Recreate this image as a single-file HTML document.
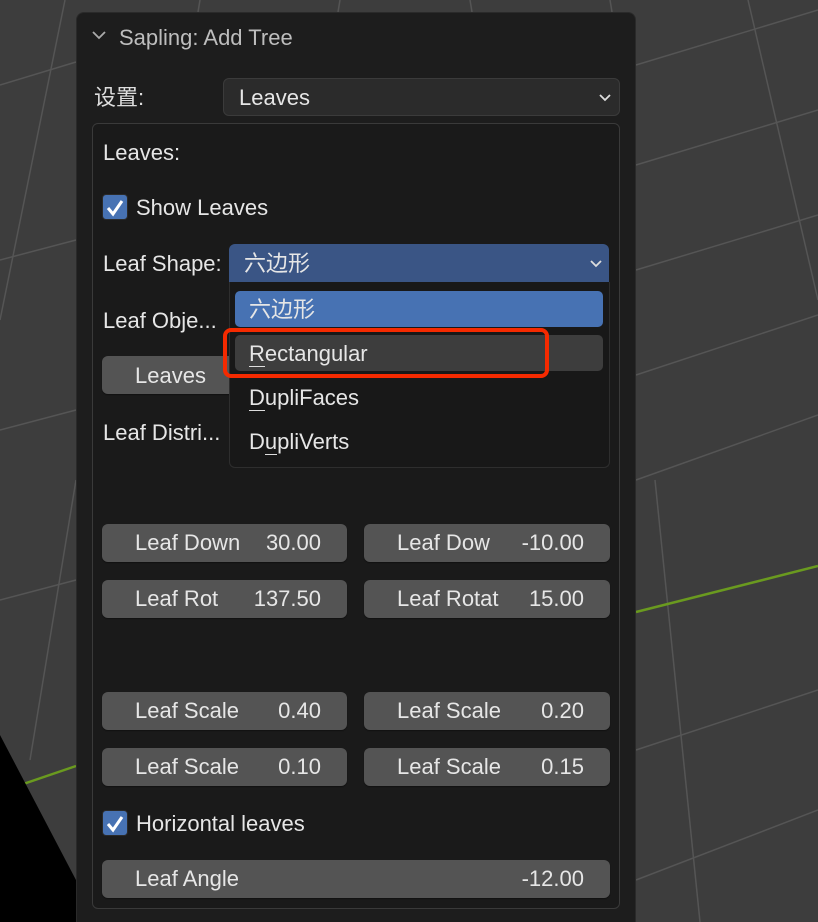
<!DOCTYPE html>
<html><head><meta charset="utf-8"><style>
*{margin:0;padding:0;box-sizing:border-box}
html,body{width:818px;height:922px;overflow:hidden}
body{background:#3d3d3d;position:relative;font-family:"Liberation Sans","Noto Sans CJK SC",sans-serif;font-size:22px;color:#e6e6e6}
.a{position:absolute}
.t{position:absolute;line-height:26px;white-space:nowrap}
.btn{position:absolute;background:#545454;border-radius:6px;height:38px;box-shadow:0 1px 1px #111}
.btn .l{position:absolute;left:33px;top:6px;line-height:26px}
.btn .v{position:absolute;right:26px;top:6px;line-height:26px}
.cb{position:absolute;width:26px;height:26px;background:#4772b3;border-radius:4px;border:1px solid #2a2a2a}
u{text-decoration:none;border-bottom:1.5px solid #ddd}
</style></head><body>
<svg class="a" style="left:0;top:0" width="818" height="922">
<g stroke="#555" stroke-width="1.5" fill="none">
<line x1="65" y1="0" x2="0" y2="320"/>
<line x1="0" y1="85" x2="76" y2="62"/>
<line x1="0" y1="260" x2="76" y2="240"/>
<line x1="0" y1="430" x2="76" y2="410"/>
<line x1="0" y1="600" x2="76" y2="580"/>
<line x1="76" y1="480" x2="30" y2="760"/>
<line x1="636" y1="65" x2="818" y2="10"/>
<line x1="636" y1="165" x2="818" y2="110"/>
<line x1="636" y1="270" x2="818" y2="215"/>
<line x1="636" y1="375" x2="818" y2="315"/>
<line x1="636" y1="480" x2="818" y2="415"/>
<line x1="636" y1="750" x2="818" y2="690"/>
<line x1="636" y1="880" x2="818" y2="810"/>
<line x1="748" y1="0" x2="818" y2="300"/>
<line x1="655" y1="480" x2="700" y2="922"/>
<line x1="200" y1="0" x2="198" y2="12"/>
<line x1="340" y1="0" x2="338" y2="12"/>
<line x1="470" y1="0" x2="472" y2="12"/>
<line x1="610" y1="0" x2="612" y2="12"/>
</g>
<line x1="636" y1="612" x2="818" y2="566" stroke="#6a9a1f" stroke-width="2.5"/>
<line x1="0" y1="792" x2="76" y2="766" stroke="#6a9a1f" stroke-width="2.5"/>
<polygon points="0,735 76,880 76,922 0,922" fill="#000"/>
</svg>
<div class="a" style="left:76px;top:12px;width:560px;height:910px;background:#1d1d1d;border-radius:8px 8px 0 0;border:1px solid #2a2a2a;border-bottom:none"></div>
<svg class="a" style="left:91px;top:30px" width="16" height="12"><path d="M2 2 L8 8 L14 2" stroke="#aaa" stroke-width="1.8" fill="none"/></svg>
<div class="t" style="left:119px;top:25px;color:#bdbdbd">Sapling: Add Tree</div>
<div class="t" style="left:94px;top:85px;color:#ddd">设置:</div>
<div class="a" style="left:223px;top:78px;width:397px;height:38px;background:#2b2b2b;border:1px solid #3b3b3b;border-radius:6px"></div>
<div class="t" style="left:239px;top:85px">Leaves</div>
<svg class="a" style="left:598px;top:93px" width="14" height="10"><path d="M2 2 L7 7 L12 2" stroke="#ddd" stroke-width="1.8" fill="none"/></svg>
<div class="a" style="left:92px;top:123px;width:528px;height:786px;border:1px solid #3a3a3a;border-radius:6px;background:#1a1a1a"></div>
<div class="t" style="left:103px;top:140px">Leaves:</div>
<div class="cb" style="left:102px;top:194px"></div>
<svg class="a" style="left:105px;top:198px" width="20" height="20"><path d="M3 10 L8 16 L17 3" stroke="#fff" stroke-width="3" fill="none"/></svg>
<div class="t" style="left:136px;top:195px">Show Leaves</div>
<div class="t" style="left:103px;top:251px">Leaf Shape:</div>
<div class="a" style="left:229px;top:244px;width:380px;height:38px;background:#3a5585;border-radius:6px 6px 0 0"></div>
<div class="t" style="left:244px;top:251px">六边形</div>
<svg class="a" style="left:589px;top:259px" width="14" height="10"><path d="M2 2 L7 7 L12 2" stroke="#ddd" stroke-width="1.8" fill="none"/></svg>
<div class="t" style="left:103px;top:308px">Leaf Obje...</div>
<div class="btn" style="left:102px;top:356px;width:140px"></div>
<div class="t" style="left:135px;top:363px">Leaves</div>
<div class="t" style="left:103px;top:420px">Leaf Distri...</div>
<div class="a" style="left:229px;top:282px;width:381px;height:186px;background:#181818;border:1px solid #2e2e2e;border-top:none;border-radius:0 0 6px 6px"></div>
<div class="a" style="left:235px;top:291px;width:368px;height:36px;background:#4772b3;border-radius:5px"></div>
<div class="t" style="left:249px;top:297px">六边形</div>
<div class="a" style="left:235px;top:335px;width:368px;height:36px;background:#3d3d3d;border-radius:5px"></div>
<div class="a" style="left:223px;top:328px;width:326px;height:50px;border:4px solid #f52a00;border-radius:8px"></div>
<div class="t" style="left:249px;top:341px"><u>R</u>ectangular</div>
<div class="t" style="left:249px;top:385px"><u>D</u>upliFaces</div>
<div class="t" style="left:249px;top:429px">D<u>u</u>pliVerts</div>
<div class="btn" style="left:102px;top:524px;width:245px"><span class="l">Leaf Down</span><span class="v">30.00</span></div>
<div class="btn" style="left:364px;top:524px;width:246px"><span class="l">Leaf Dow</span><span class="v">-10.00</span></div>
<div class="btn" style="left:102px;top:580px;width:245px"><span class="l">Leaf Rot</span><span class="v">137.50</span></div>
<div class="btn" style="left:364px;top:580px;width:246px"><span class="l">Leaf Rotat</span><span class="v">15.00</span></div>
<div class="btn" style="left:102px;top:692px;width:245px"><span class="l">Leaf Scale</span><span class="v">0.40</span></div>
<div class="btn" style="left:364px;top:692px;width:246px"><span class="l">Leaf Scale</span><span class="v">0.20</span></div>
<div class="btn" style="left:102px;top:748px;width:245px"><span class="l">Leaf Scale</span><span class="v">0.10</span></div>
<div class="btn" style="left:364px;top:748px;width:246px"><span class="l">Leaf Scale</span><span class="v">0.15</span></div>
<div class="cb" style="left:102px;top:810px"></div>
<svg class="a" style="left:105px;top:814px" width="20" height="20"><path d="M3 10 L8 16 L17 3" stroke="#fff" stroke-width="3" fill="none"/></svg>
<div class="t" style="left:136px;top:811px">Horizontal leaves</div>
<div class="btn" style="left:102px;top:860px;width:508px"><span class="l">Leaf Angle</span><span class="v">-12.00</span></div>
</body></html>
